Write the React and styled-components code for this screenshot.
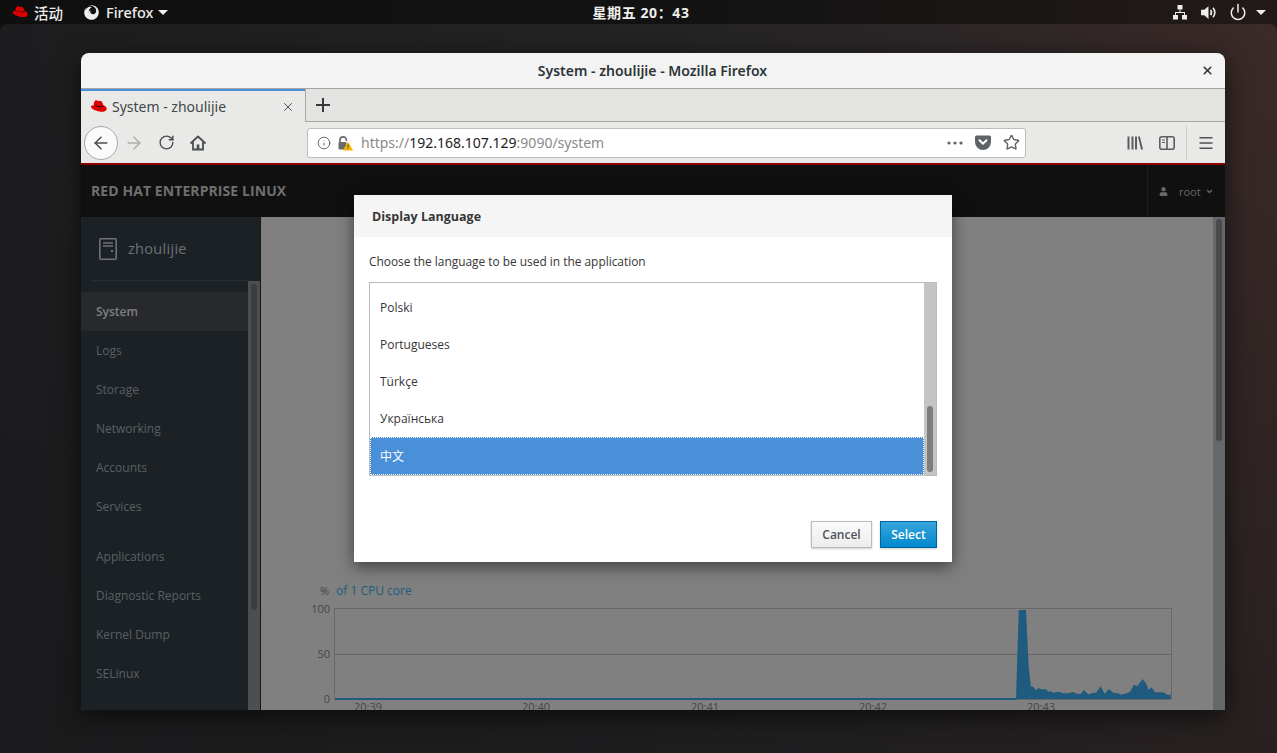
import React from "react";
import styled, { createGlobalStyle } from "styled-components";
import { ArrowLeft, ArrowRight, RotateCw, Info, Star, Menu, X, Power } from "lucide-react";
import { FaFirefox, FaUser, FaAngleDown } from "react-icons/fa";

const GlobalStyle = createGlobalStyle`
  html, body {
    margin: 0;
    padding: 0;
    background: #000;
  }
  * {
    box-sizing: border-box;
  }
`;

// ---- desktop ----
const Screen = styled.div`
  width: 1277px;
  height: 753px;
  overflow: hidden;
  display: flex;
  flex-direction: column;
  background: linear-gradient(90deg, #0f0f10 0%, #141313 60%, #221a19 100%);
  font-family: "Noto Sans", "Noto Sans CJK SC", sans-serif;
`;
const TopBar = styled.div`
  height: 24px;
  flex: none;
  display: flex;
  align-items: center;
  color: #eeeeec;
  font-size: 14.5px;
  position: relative;
`;
const TopLeft = styled.div`
  display: flex;
  align-items: center;
  flex: 1;
  padding-left: 12px;
`;
const TopItem = styled.span`
  margin-left: ${(p) => p.$gap || 0}px;
  display: inline-flex;
  align-items: center;
  font-weight: 500;
`;
const Caret = styled.span`
  display: inline-block;
  margin-left: ${(p) => p.$gap || 6}px;
  border-left: 5px solid transparent;
  border-right: 5px solid transparent;
  border-top: 5px solid #eeeeec;
`;
const Clock = styled.div`
  font-weight: 700;
  font-size: 14px;
  letter-spacing: 0.6px;
  margin-left: 4px;
`;
const TopRight = styled.div`
  flex: 1;
  display: flex;
  justify-content: flex-end;
  align-items: center;
  gap: 12px;
  padding-right: 11px;
`;
const Wallpaper = styled.div`
  flex: 1;
  border-radius: 8px 8px 0 0;
  background:
    linear-gradient(180deg, rgba(24, 24, 26, 0) 0%, rgba(24, 24, 26, 0.55) 100%),
    linear-gradient(90deg, #1d1d1f 0%, #232324 50%, #2c2627 75%, #3b2a28 100%);
  padding: 29px 52px 43px 81px;
`;

// ---- browser window ----
const Win = styled.div`
  height: 657px;
  border-radius: 8px 8px 0 0;
  box-shadow: 0 6px 24px rgba(0, 0, 0, 0.6);
  overflow: hidden;
  display: flex;
  flex-direction: column;
  position: relative;
`;
const TitleBar = styled.div`
  height: 36px;
  flex: none;
  display: flex;
  align-items: center;
  background: #f3f3f3;
  border-bottom: 1px solid #a5a5a2;
  color: #2e3436;
  font-weight: 600;
  font-size: 14px;
`;
const TitleText = styled.div`
  flex: 1;
  text-align: center;
  padding-left: 35px;
`;
const TitleClose = styled.div`
  width: 36px;
  display: flex;
  justify-content: center;
  color: #2e3436;
`;
const TabBar = styled.div`
  height: 33px;
  flex: none;
  display: flex;
  background: #e3e3e1;
  border-bottom: 1px solid #a9a9a6;
`;
const Tab = styled.div`
  width: 224px;
  height: 33px;
  display: flex;
  align-items: center;
  background: #e9e9e7;
  border-top: 2px solid #4a90d9;
  padding: 0 10px 0 9px;
  color: #43484a;
  font-size: 14px;
`;
const TabTitle = styled.span`
  flex: 1;
  margin-left: 5px;
`;
const NewTab = styled.div`
  width: 35px;
  display: flex;
  align-items: center;
  justify-content: center;
  border-left: 1px solid #a9a9a6;
  color: #33383a;
`;
const NavBar = styled.div`
  height: 41px;
  flex: none;
  display: flex;
  align-items: center;
  background: #e9e9e7;
  padding-left: 3px;
`;
const BackButton = styled.div`
  width: 34px;
  height: 34px;
  border-radius: 50%;
  background: #fafafa;
  border: 1px solid #a8a8a8;
  display: flex;
  align-items: center;
  justify-content: center;
  color: #4a4f52;
`;
const NavSlot = styled.div`
  width: 32px;
  display: flex;
  justify-content: center;
  color: ${(p) => p.$color || "#4a4f52"};
`;
const UrlBar = styled.div`
  width: 719px;
  height: 30px;
  margin-left: 93px;
  background: #fff;
  border: 1px solid #bdbdbb;
  border-radius: 3px;
  display: flex;
  align-items: center;
  padding-left: 9px;
  font-size: 14px;
  color: #8a8a8a;
`;
const UrlText = styled.div`
  flex: 1;
  margin-left: 8px;
  & b {
    font-weight: 400;
    color: #222;
  }
`;
const UrlGap = styled.span`
  width: 6px;
`;
const UrlSlot = styled.div`
  width: 28px;
  display: flex;
  justify-content: center;
  color: #5f6365;
`;
const Tools = styled.div`
  flex: 1;
  display: flex;
  align-items: center;
  justify-content: flex-end;
  padding-right: 3px;
  color: #4f5355;
`;
const ToolSlot = styled.div`
  width: 32px;
  display: flex;
  justify-content: center;
`;
const ToolDivider = styled.div`
  width: 1px;
  height: 34px;
  background: #cfcfcd;
  margin: 0 3px;
`;
const RedLine = styled.div`
  height: 2px;
  flex: none;
  background: #8b0000;
`;

// ---- cockpit page ----
const Cockpit = styled.div`
  flex: 1;
  min-height: 0;
  display: flex;
  flex-direction: column;
  position: relative;
  font-family: "Open Sans", sans-serif;
`;
const Header = styled.div`
  height: 52px;
  flex: none;
  background: #101010;
  display: flex;
  align-items: center;
  justify-content: space-between;
`;
const Brand = styled.div`
  padding: 0 0 2px 10px;
  font-weight: 700;
  font-size: 14px;
  color: #6f6f6f;
  letter-spacing: 0.08px;
`;
const UserMenu = styled.div`
  width: 78px;
  height: 100%;
  border-left: 1px solid #1b1b1b;
  display: flex;
  align-items: center;
  padding-left: 11px;
  font-size: 11px;
  color: #666;
  gap: 4px;
`;
const UserName = styled.span`
  margin-left: 7px;
`;
const Body = styled.div`
  flex: 1;
  min-height: 0;
  display: flex;
`;
const Sidebar = styled.div`
  width: 180px;
  flex: none;
  background: #1c2126;
  display: flex;
  flex-direction: column;
  border-right: 1px solid #141618;
`;
const Host = styled.div`
  height: 64px;
  flex: none;
  margin: 0 12px 0 10px;
  padding-left: 8px;
  display: flex;
  align-items: center;
  gap: 11px;
  color: #6e7275;
  font-size: 14.5px;
  letter-spacing: 0.3px;
  border-bottom: 1px solid #2a2d30;
`;
const SideBody = styled.div`
  flex: 1;
  min-height: 0;
  display: flex;
`;
const NavList = styled.div`
  flex: 1;
  padding-top: 11px;
`;
const NavItem = styled.div`
  height: 39px;
  display: flex;
  align-items: center;
  padding-left: 15px;
  font-size: 12px;
  margin-bottom: ${(p) => (p.$groupEnd ? 11 : 0)}px;
  background: ${(p) => (p.$active ? "#27292d" : "transparent")};
  color: ${(p) => (p.$active ? "#7d8083" : "#5a6063")};
  font-weight: ${(p) => (p.$active ? 600 : 400)};
`;
const Track = styled.div`
  width: 12px;
  flex: none;
  background: ${(p) => p.$bg};
  padding: ${(p) => p.$top}px 3px 0;
`;
const Thumb = styled.div`
  height: ${(p) => p.$height}px;
  border-radius: 3px;
  background: ${(p) => p.$bg};
`;
const Main = styled.div`
  flex: 1;
  min-width: 0;
  background: #808080;
  padding-top: 366px;
  overflow: hidden;
`;
const ChartTitle = styled.div`
  height: 17px;
  padding: 0 0 2px 59px;
  display: flex;
  align-items: center;
  gap: 7px;
  font-size: 12px;
  color: #1d5d80;
`;
const Percent = styled.span`
  font-size: 11px;
  color: #444;
`;
const ChartSvg = styled.svg`
  display: block;
`;

// ---- dialog ----
const Dialog = styled.div`
  position: absolute;
  left: 273px;
  top: 30px;
  width: 598px;
  height: 367px;
  background: #fff;
  box-shadow: 0 5px 15px rgba(0, 0, 0, 0.5);
  display: flex;
  flex-direction: column;
`;
const DialogHead = styled.div`
  height: 42px;
  flex: none;
  background: #f5f5f5;
  padding-left: 18px;
  display: flex;
  align-items: center;
  font-weight: 700;
  font-size: 12.5px;
  color: #363636;
`;
const DialogBody = styled.div`
  flex: 1;
  padding: 0 15px;
`;
const Prompt = styled.div`
  height: 45px;
  padding-top: 2px;
  display: flex;
  align-items: center;
  font-size: 11.9px;
  color: #363636;
`;
const ListBox = styled.div`
  height: 194px;
  border: 1px solid #bbb;
  display: flex;
`;
const LangList = styled.div`
  flex: 1;
  padding-top: 6px;
`;
const Lang = styled.div`
  height: ${(p) => (p.$selected ? 38 : 37)}px;
  display: flex;
  align-items: center;
  padding-left: 10px;
  font-size: 12px;
  font-family: "Open Sans", "Noto Sans CJK SC", sans-serif;
  color: ${(p) => (p.$selected ? "#fff" : "#363636")};
  background: ${(p) => (p.$selected ? "#4a90d9" : "transparent")};
  outline: ${(p) => (p.$selected ? "1px dotted #fff" : "none")};
  outline-offset: -1px;
`;
const ListTrack = styled.div`
  width: 12px;
  flex: none;
  background: #c4c4c4;
  padding: 123px 3px 0;
`;
const ListThumb = styled.div`
  height: 66px;
  border-radius: 3px;
  background: #7d7d7d;
`;
const DialogFoot = styled.div`
  height: 41px;
  flex: none;
  padding: 0 15px 14px;
  display: flex;
  justify-content: flex-end;
  gap: 8px;
`;
const Button = styled.div`
  height: 27px;
  display: flex;
  align-items: center;
  justify-content: center;
  width: ${(p) => p.$width}px;
  font-size: 12px;
  font-weight: 600;
  box-shadow: 0 1px 2px rgba(0, 0, 0, 0.2);
  color: ${(p) => (p.$primary ? "#fff" : "#4d5258")};
  border: 1px solid ${(p) => (p.$primary ? "#00659c" : "#bbb")};
  background: ${(p) =>
    p.$primary
      ? "linear-gradient(#39a5dc, #0088ce)"
      : "linear-gradient(#fafafa, #ededed)"};
`;

// ---- drawings ----
const RedHat = ({ size }) => (
  <svg width={size} height={size * 0.72} viewBox="0 0 36 26">
    <path
      d="M12 0.5 C15 0 17 2.5 19 2 C23 0.5 26.5 4 28 10.5 C32 12 35.5 15 35.5 18.5 C35.5 23.5 29 25.5 23 25 C14 24 2 19.5 2 14 C2 11.5 5 11 7.5 12 C8 7 9 1.5 12 0.5 Z"
      fill="#e00000"
    />
    <path d="M10 12 C15 14.5 22 15.5 28.5 14 L28 12 C22 13.5 15 12.5 10 10.5 Z" fill="#111" />
  </svg>
);
const NetworkIcon = () => (
  <svg width="16" height="16" viewBox="0 0 16 16" fill="#eeeeec">
    <rect x="5.5" y="1" width="5" height="4.5" />
    <rect x="1" y="11" width="5" height="4.5" />
    <rect x="10" y="11" width="5" height="4.5" />
    <path d="M7.5 5.5h1V8H13v3h-1V9H4v2H3V8h4.5z" />
  </svg>
);
const VolumeIcon = () => (
  <svg width="17" height="17" viewBox="0 0 16 16" fill="none" stroke="#eeeeec">
    <path d="M1 5.5h3L8 2v12l-4-3.5H1z" fill="#eeeeec" stroke="none" />
    <path d="M10 5.5c1 1.5 1 3.5 0 5" strokeWidth="1.5" />
    <path d="M12.3 3.5c2 2.7 2 6.3 0 9" strokeWidth="1.5" />
  </svg>
);
const HomeIcon = () => (
  <svg width="16" height="16" viewBox="0 0 16 16" fill="none" stroke="#4a4f52" strokeWidth="1.8">
    <path d="M1 8 8 1.5 15 8" strokeLinecap="round" strokeLinejoin="round" />
    <path d="M3 7v7.5h10V7" />
    <rect x="6.7" y="9.5" width="2.6" height="5" fill="#4a4f52" stroke="none" />
  </svg>
);
const LockWarn = () => (
  <svg width="16" height="16" viewBox="0 0 16 16">
    <path d="M3 7V5a3.2 3.2 0 0 1 6.4 0V6" fill="none" stroke="#6a6a6a" strokeWidth="1.7" />
    <rect x="1.5" y="7" width="8" height="7.5" rx="1" fill="#6a6a6a" />
    <path d="M11 6.5 16 15.5H6z" fill="#f5b800" />
    <rect x="10.6" y="9.5" width="0.9" height="3" fill="#333" />
    <rect x="10.6" y="13.2" width="0.9" height="1" fill="#333" />
  </svg>
);
const PocketIcon = () => (
  <svg width="16" height="15" viewBox="0 0 16 15">
    <path d="M1.5 0.5h13A1.5 1.5 0 0 1 16 2v5a8 8 0 0 1-16 0V2A1.5 1.5 0 0 1 1.5 0.5z" fill="#5f6365" />
    <path d="M4.5 5.2 8 8.6l3.5-3.4" fill="none" stroke="#fff" strokeWidth="2" strokeLinecap="round" />
  </svg>
);
const Dots = () => (
  <svg width="16" height="4" viewBox="0 0 16 4" fill="#5f6365">
    <circle cx="2" cy="2" r="1.6" />
    <circle cx="8" cy="2" r="1.6" />
    <circle cx="14" cy="2" r="1.6" />
  </svg>
);
const LibraryIcon = () => (
  <svg width="16" height="14" viewBox="0 0 16 14" fill="#5a5e60">
    <rect x="0.5" y="0.5" width="2" height="13" />
    <rect x="4.5" y="0.5" width="2" height="13" />
    <rect x="8" y="0.5" width="2" height="13" />
    <path d="M11 .8 12.8.2 16 13.2l-1.9.6z" />
  </svg>
);
const SidebarIcon = () => (
  <svg width="16" height="14" viewBox="0 0 16 14" fill="none" stroke="#5a5e60" strokeWidth="1.6">
    <rect x="0.8" y="0.8" width="14.4" height="12.4" rx="2" />
    <path d="M8 1v12" />
    <path d="M3 4h3M3 6.5h3" strokeWidth="1.2" />
  </svg>
);
const ServerIcon = () => (
  <svg width="18" height="22" viewBox="0 0 18 22" fill="none" stroke="#6e7275" strokeWidth="1.6">
    <rect x="0.8" y="0.8" width="16.4" height="20.4" rx="1" />
    <path d="M4 5h10M4 8h10" strokeWidth="1.5" />
    <rect x="12" y="12" width="2" height="2" fill="#6e7275" stroke="none" />
  </svg>
);

const cpu = [
  [168, 387], [176, 120], [198, 120], [206, 290], [213, 350], [220, 350], [228, 360],
  [236, 354], [245, 358], [258, 358], [265, 365], [272, 363], [280, 369], [290, 365],
  [300, 366], [310, 370], [325, 370], [338, 366], [352, 371], [362, 372], [371, 360],
  [385, 373], [400, 368], [408, 368], [422, 349], [434, 372], [446, 357], [460, 368],
  [475, 370], [482, 374], [500, 370], [510, 365], [522, 344], [532, 348], [548, 327],
  [558, 340], [566, 360], [575, 352], [585, 367], [610, 367], [625, 376], [632, 372], [632, 387],
];
// zoomed crop coords to the svg's own coords
const cpuPoints = cpu
  .map(([x, y]) => `${(x / 3 + 960 - 261).toFixed(1)},${(y / 3 + 570 - 600).toFixed(1)}`)
  .join(" ");

const ticks = [
  ["20:39", 107],
  ["20:40", 275],
  ["20:41", 444],
  ["20:42", 612],
  ["20:43", 780],
];

const Chart = () => (
  <ChartSvg width="952" height="110" viewBox="0 0 952 110">
    <rect x="73.5" y="8.5" width="837" height="91" fill="none" stroke="#686868" />
    <line x1="73" y1="54.5" x2="911" y2="54.5" stroke="#686868" />
    <line x1="74" y1="99" x2="756" y2="99" stroke="#1f5b7e" strokeWidth="2" />
    <polygon points={cpuPoints} fill="#1f5b7e" />
    <g fontFamily="Open Sans, sans-serif" fontSize="11" fill="#444" textAnchor="end">
      <text x="69" y="13">100</text>
      <text x="69" y="58">50</text>
      <text x="69" y="103">0</text>
    </g>
    <g fontFamily="Open Sans, sans-serif" fontSize="11" fill="#444" textAnchor="middle">
      {ticks.map(([t, x]) => (
        <text key={t} x={x} y="111">{t}</text>
      ))}
    </g>
  </ChartSvg>
);

const navGroups = [
  ["System", "Logs", "Storage", "Networking", "Accounts", "Services"],
  ["Applications", "Diagnostic Reports", "Kernel Dump", "SELinux"],
];
const langs = ["Polski", "Portugueses", "Türkçe", "Українська"];

export default function App() {
  return (
    <Screen>
      <GlobalStyle />
      <TopBar>
        <TopLeft>
          <RedHat size={16} />
          <TopItem $gap={6}>活动</TopItem>
          <TopItem $gap={21}><FaFirefox size={15} /></TopItem>
          <TopItem $gap={7}>Firefox</TopItem>
          <Caret $gap={5} />
        </TopLeft>
        <Clock>星期五 20：43</Clock>
        <TopRight>
          <NetworkIcon />
          <VolumeIcon />
          <Power size={18} strokeWidth={2} />
          <Caret $gap={-3} />
        </TopRight>
      </TopBar>
      <Wallpaper>
        <Win>
          <TitleBar>
            <TitleText>System - zhoulijie - Mozilla Firefox</TitleText>
            <TitleClose><X size={13} strokeWidth={3} /></TitleClose>
          </TitleBar>
          <TabBar>
            <Tab>
              <RedHat size={17} />
              <TabTitle>System - zhoulijie</TabTitle>
              <X size={14} strokeWidth={1.6} />
            </Tab>
            <NewTab>
              <svg width="14" height="14" viewBox="0 0 14 14" fill="#33383a">
                <rect x="6" y="0" width="2" height="14" />
                <rect x="0" y="6" width="14" height="2" />
              </svg>
            </NewTab>
          </TabBar>
          <NavBar>
            <BackButton><ArrowLeft size={20} strokeWidth={1.8} /></BackButton>
            <NavSlot $color="#adadab"><ArrowRight size={20} strokeWidth={1.8} /></NavSlot>
            <NavSlot><RotateCw size={17} strokeWidth={2} /></NavSlot>
            <NavSlot><HomeIcon /></NavSlot>
            <UrlBar>
              <Info size={14} strokeWidth={1.6} color="#5f6365" />
              <UrlGap />
              <LockWarn />
              <UrlText>https://<b>192.168.107.129</b>:9090/system</UrlText>
              <UrlSlot><Dots /></UrlSlot>
              <UrlSlot><PocketIcon /></UrlSlot>
              <UrlSlot><Star size={17} strokeWidth={2} /></UrlSlot>
            </UrlBar>
            <Tools>
              <ToolSlot><LibraryIcon /></ToolSlot>
              <ToolSlot><SidebarIcon /></ToolSlot>
              <ToolDivider />
              <ToolSlot><Menu size={18} strokeWidth={2} /></ToolSlot>
            </Tools>
          </NavBar>
          <RedLine />
          <Cockpit>
            <Header>
              <Brand>RED HAT ENTERPRISE LINUX</Brand>
              <UserMenu>
                <FaUser size={9} />
                <UserName>root</UserName>
                <FaAngleDown size={9} />
              </UserMenu>
            </Header>
            <Body>
              <Sidebar>
                <Host>
                  <ServerIcon />
                  zhoulijie
                </Host>
                <SideBody>
                  <NavList>
                    {navGroups.map((group, g) =>
                      group.map((name, i) => (
                        <NavItem
                          key={name}
                          $active={name === "System"}
                          $groupEnd={g === 0 && i === group.length - 1}
                        >
                          {name}
                        </NavItem>
                      ))
                    )}
                  </NavList>
                  <Track $bg="#4c4e50" $top={3}>
                    <Thumb $bg="#3b3d3f" $height={326} />
                  </Track>
                </SideBody>
              </Sidebar>
              <Main>
                <ChartTitle>
                  <Percent>%</Percent>
                  of 1 CPU core
                </ChartTitle>
                <Chart />
              </Main>
              <Track $bg="#656868" $top={2}>
                <Thumb $bg="#4a4a4a" $height={222} />
              </Track>
            </Body>
            <Dialog>
              <DialogHead>Display Language</DialogHead>
              <DialogBody>
                <Prompt>Choose the language to be used in the application</Prompt>
                <ListBox>
                  <LangList>
                    {langs.map((l) => (
                      <Lang key={l}>{l}</Lang>
                    ))}
                    <Lang $selected>中文</Lang>
                  </LangList>
                  <ListTrack>
                    <ListThumb />
                  </ListTrack>
                </ListBox>
              </DialogBody>
              <DialogFoot>
                <Button $width={61}>Cancel</Button>
                <Button $width={57} $primary>Select</Button>
              </DialogFoot>
            </Dialog>
          </Cockpit>
        </Win>
      </Wallpaper>
    </Screen>
  );
}
